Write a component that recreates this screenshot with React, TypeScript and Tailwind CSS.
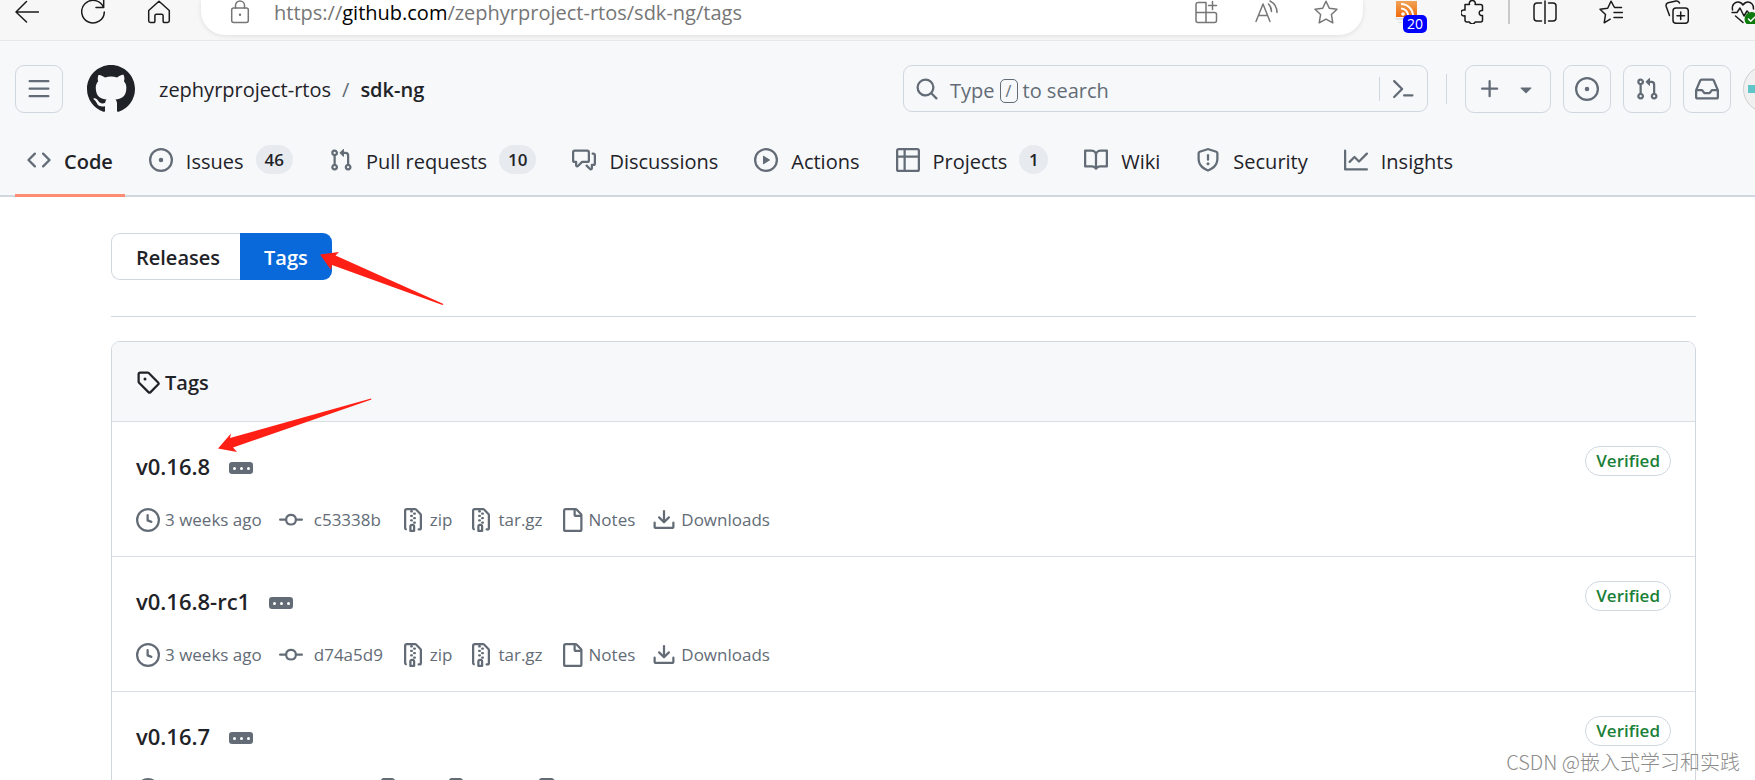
import type { ReactNode } from "react";

const paths = {
  bars: "M1 2.75A.75.75 0 0 1 1.75 2h12.5a.75.75 0 0 1 0 1.5H1.75A.75.75 0 0 1 1 2.75Zm0 5A.75.75 0 0 1 1.75 7h12.5a.75.75 0 0 1 0 1.5H1.75A.75.75 0 0 1 1 7.75ZM1.75 12h12.5a.75.75 0 0 1 0 1.5H1.75a.75.75 0 0 1 0-1.5Z",
  github:
    "M8 0c4.42 0 8 3.58 8 8a8.013 8.013 0 0 1-5.45 7.59c-.4.08-.55-.17-.55-.38 0-.27.01-1.13.01-2.2 0-.75-.25-1.23-.54-1.48 1.78-.2 3.65-.88 3.65-3.95 0-.88-.31-1.59-.82-2.15.08-.2.36-1.02-.08-2.12 0 0-.67-.22-2.2.82-.64-.18-1.32-.27-2-.27-.68 0-1.36.09-2 .27-1.53-1.03-2.2-.82-2.2-.82-.44 1.1-.16 1.92-.08 2.12-.51.56-.82 1.28-.82 2.15 0 3.06 1.86 3.75 3.64 3.95-.23.2-.44.55-.51 1.07-.46.21-1.61.55-2.33-.66-.15-.24-.6-.83-1.23-.82-.67.01-.27.38.01.53.34.19.73.9.82 1.13.16.45.68 1.31 2.69.94 0 .67.01 1.3.01 1.49 0 .21-.15.45-.55.38A7.995 7.995 0 0 1 0 8c0-4.42 3.58-8 8-8Z",
  search:
    "M10.68 11.74a6 6 0 0 1-7.922-8.982 6 6 0 0 1 8.982 7.922l3.04 3.04a.749.749 0 0 1-.326 1.275.749.749 0 0 1-.734-.215ZM11.5 7a4.499 4.499 0 1 0-8.997 0A4.499 4.499 0 0 0 11.5 7Z",
  palette:
    "m6.354 8.04-4.773 4.773a.75.75 0 1 0 1.061 1.06L7.945 8.57a.75.75 0 0 0 0-1.06L2.642 2.206a.75.75 0 0 0-1.06 1.061L6.353 8.04ZM8.75 11.5a.75.75 0 0 0 0 1.5h5.5a.75.75 0 0 0 0-1.5h-5.5Z",
  plus: "M7.75 2a.75.75 0 0 1 .75.75V7h4.25a.75.75 0 0 1 0 1.5H8.5v4.25a.75.75 0 0 1-1.5 0V8.5H2.75a.75.75 0 0 1 0-1.5H7V2.75A.75.75 0 0 1 7.75 2Z",
  caret:
    "m4.427 7.427 3.396 3.396a.25.25 0 0 0 .354 0l3.396-3.396A.25.25 0 0 0 11.396 7H4.604a.25.25 0 0 0-.177.427Z",
  inbox:
    "M2.8 2.06A1.75 1.75 0 0 1 4.41 1h7.18c.7 0 1.333.417 1.61 1.06l2.74 6.395c.04.093.06.194.06.295v4.5A1.75 1.75 0 0 1 14.25 15H1.75A1.75 1.75 0 0 1 0 13.25v-4.5c0-.101.02-.202.06-.295Zm1.61.44a.25.25 0 0 0-.23.152L1.887 8H4.75a.75.75 0 0 1 .6.3L6.625 10h2.75l1.275-1.7a.75.75 0 0 1 .6-.3h2.863L11.82 2.652a.25.25 0 0 0-.23-.152Zm10.09 7h-2.875l-1.275 1.7a.75.75 0 0 1-.6.3h-3.5a.75.75 0 0 1-.6-.3L4.375 9.5H1.5v3.75c0 .138.112.25.25.25h12.5a.25.25 0 0 0 .25-.25Z",
  code: "m11.28 3.22 4.25 4.25a.75.75 0 0 1 0 1.06l-4.25 4.25a.749.749 0 0 1-1.275-.326.749.749 0 0 1 .215-.734L13.94 8l-3.72-3.72a.749.749 0 0 1 .326-1.275.749.749 0 0 1 .734.215Zm-6.56 0a.751.751 0 0 1 1.042.018.751.751 0 0 1 .018 1.042L2.06 8l3.72 3.72a.749.749 0 0 1-.326 1.275.749.749 0 0 1-.734-.215L.47 8.53a.75.75 0 0 1 0-1.06Z",
  issue:
    "M8 9.5a1.5 1.5 0 1 0 0-3 1.5 1.5 0 0 0 0 3ZM8 0a8 8 0 1 1 0 16A8 8 0 0 1 8 0ZM1.5 8a6.5 6.5 0 1 0 13 0 6.5 6.5 0 0 0-13 0Z",
  pull: "M1.5 3.25a2.25 2.25 0 1 1 3 2.122v5.256a2.251 2.251 0 1 1-1.5 0V5.372A2.25 2.25 0 0 1 1.5 3.25Zm5.677-.177L9.573.677A.25.25 0 0 1 10 .854V2.5h1A2.5 2.5 0 0 1 13.5 5v5.628a2.251 2.251 0 1 1-1.5 0V5a1 1 0 0 0-1-1h-1v1.646a.25.25 0 0 1-.427.177L7.177 3.427a.25.25 0 0 1 0-.354ZM3.75 2.5a.75.75 0 1 0 0 1.5.75.75 0 0 0 0-1.5Zm0 9.5a.75.75 0 1 0 0 1.5.75.75 0 0 0 0-1.5Zm8.25.75a.75.75 0 1 0 1.5 0 .75.75 0 0 0-1.5 0Z",
  discussion:
    "M1.75 1h8.5c.966 0 1.75.784 1.75 1.75v5.5A1.75 1.75 0 0 1 10.25 10H7.061l-2.574 2.573A1.458 1.458 0 0 1 2 11.543V10h-.25A1.75 1.75 0 0 1 0 8.25v-5.5C0 1.784.784 1 1.75 1ZM1.5 2.75v5.5c0 .138.112.25.25.25h1a.75.75 0 0 1 .75.75v2.19l2.72-2.72a.749.749 0 0 1 .53-.22h3.5a.25.25 0 0 0 .25-.25v-5.5a.25.25 0 0 0-.25-.25h-8.5a.25.25 0 0 0-.25.25Zm13 2a.25.25 0 0 0-.25-.25h-.5a.75.75 0 0 1 0-1.5h.5c.966 0 1.75.784 1.75 1.75v5.5A1.75 1.75 0 0 1 14.25 12H14v1.543a1.458 1.458 0 0 1-2.487 1.03L9.22 12.28a.749.749 0 0 1 .326-1.275.749.749 0 0 1 .734.215l2.22 2.22v-2.19a.75.75 0 0 1 .75-.75h1a.25.25 0 0 0 .25-.25Z",
  play: "M8 0a8 8 0 1 1 0 16A8 8 0 0 1 8 0ZM1.5 8a6.5 6.5 0 1 0 13 0 6.5 6.5 0 0 0-13 0Zm4.879-2.773 4.264 2.559a.25.25 0 0 1 0 .428l-4.264 2.559A.25.25 0 0 1 6 10.559V5.442a.25.25 0 0 1 .379-.215Z",
  table:
    "M0 1.75C0 .784.784 0 1.75 0h12.5C15.216 0 16 .784 16 1.75v12.5A1.75 1.75 0 0 1 14.25 16H1.75A1.75 1.75 0 0 1 0 14.25ZM6.5 6.5v8h7.75a.25.25 0 0 0 .25-.25V6.5Zm8-1.5V1.75a.25.25 0 0 0-.25-.25H6.5V5Zm-13 1.5v7.75c0 .138.112.25.25.25H5v-8ZM5 5V1.5H1.75a.25.25 0 0 0-.25.25V5Z",
  book: "M0 1.75A.75.75 0 0 1 .75 1h4.253c1.227 0 2.317.59 3 1.501A3.743 3.743 0 0 1 11.006 1h4.245a.75.75 0 0 1 .75.75v10.5a.75.75 0 0 1-.75.75h-4.507a2.25 2.25 0 0 0-1.591.659l-.622.621a.75.75 0 0 1-1.06 0l-.622-.621A2.25 2.25 0 0 0 5.258 13H.75a.75.75 0 0 1-.75-.75Zm7.251 10.324.004-5.073-.002-2.253A2.25 2.25 0 0 0 5.003 2.5H1.5v9h3.757a3.75 3.75 0 0 1 1.994.574ZM8.755 4.75l-.004 7.322a3.752 3.752 0 0 1 1.992-.572H14.5v-9h-3.495a2.25 2.25 0 0 0-2.25 2.25Z",
  shield:
    "M7.467.133a1.748 1.748 0 0 1 1.066 0l5.25 1.68A1.75 1.75 0 0 1 15 3.48V7c0 1.566-.32 3.182-1.303 4.682-.983 1.498-2.585 2.813-5.032 3.855a1.697 1.697 0 0 1-1.33 0c-2.447-1.042-4.049-2.357-5.032-3.855C1.32 10.182 1 8.566 1 7V3.48a1.75 1.75 0 0 1 1.217-1.667Zm.61 1.429a.25.25 0 0 0-.153 0l-5.25 1.68a.25.25 0 0 0-.174.238V7c0 1.358.275 2.666 1.057 3.86.784 1.194 2.121 2.34 4.366 3.297a.196.196 0 0 0 .154 0c2.245-.956 3.582-2.104 4.366-3.298C13.225 9.666 13.5 8.36 13.5 7V3.48a.251.251 0 0 0-.174-.237l-5.25-1.68ZM8.75 4.75v3a.75.75 0 0 1-1.5 0v-3a.75.75 0 0 1 1.5 0ZM9 10.5a1 1 0 1 1-2 0 1 1 0 0 1 2 0Z",
  graph:
    "M1.5 1.75V13.5h13.75a.75.75 0 0 1 0 1.5H.75a.75.75 0 0 1-.75-.75V1.75a.75.75 0 0 1 1.5 0Zm14.28 2.53-5.25 5.25a.75.75 0 0 1-1.06 0L7 7.06 4.28 9.78a.751.751 0 0 1-1.042-.018.751.751 0 0 1-.018-1.042l3.25-3.25a.75.75 0 0 1 1.06 0L10 7.94l4.72-4.72a.751.751 0 0 1 1.042.018.751.751 0 0 1 .018 1.042Z",
  tag: "M1 7.775V2.75C1 1.784 1.784 1 2.75 1h5.025c.464 0 .91.184 1.238.513l6.25 6.25a1.75 1.75 0 0 1 0 2.474l-5.026 5.026a1.75 1.75 0 0 1-2.474 0l-6.25-6.25A1.752 1.752 0 0 1 1 7.775Zm1.5 0c0 .066.026.13.073.177l6.25 6.25a.25.25 0 0 0 .354 0l5.025-5.025a.25.25 0 0 0 0-.354l-6.25-6.25a.25.25 0 0 0-.177-.073H2.75a.25.25 0 0 0-.25.25ZM6 5a1 1 0 1 1 0 2 1 1 0 0 1 0-2Z",
  clock:
    "M8 0a8 8 0 1 1 0 16A8 8 0 0 1 8 0ZM1.5 8a6.5 6.5 0 1 0 13 0 6.5 6.5 0 0 0-13 0Zm7-3.25v2.992l2.028.812a.75.75 0 0 1-.557 1.392l-2.5-1A.751.751 0 0 1 7 8.25v-3.5a.75.75 0 0 1 1.5 0Z",
  commit:
    "M11.93 8.5a4.002 4.002 0 0 1-7.86 0H.75a.75.75 0 0 1 0-1.5h3.32a4.002 4.002 0 0 1 7.86 0h3.32a.75.75 0 0 1 0 1.5Zm-1.43-.75a2.5 2.5 0 1 0-5 0 2.5 2.5 0 0 0 5 0Z",
  zip: "M3.5 1.75v11.5c0 .09.048.173.126.217a.75.75 0 0 1-.752 1.298A1.748 1.748 0 0 1 2 13.25V1.75C2 .784 2.784 0 3.75 0h5.586c.464 0 .909.185 1.237.513l2.914 2.914c.329.328.513.773.513 1.237v8.586A1.75 1.75 0 0 1 12.25 15h-.5a.75.75 0 0 1 0-1.5h.5a.25.25 0 0 0 .25-.25V4.664a.25.25 0 0 0-.073-.177L9.513 1.573a.25.25 0 0 0-.177-.073H7.25a.75.75 0 0 1 0 1.5h-.5a.75.75 0 0 1 0-1.5h-3a.25.25 0 0 0-.25.25Zm3.75 8.75h.5c.966 0 1.75.784 1.75 1.75v3a.75.75 0 0 1-.75.75h-2.5a.75.75 0 0 1-.75-.75v-3c0-.966.784-1.75 1.75-1.75ZM6 5.25a.75.75 0 0 1 .75-.75h.5a.75.75 0 0 1 0 1.5h-.5A.75.75 0 0 1 6 5.25Zm.75 2.25h.5a.75.75 0 0 1 0 1.5h-.5a.75.75 0 0 1 0-1.5ZM8 6.75A.75.75 0 0 1 8.75 6h.5a.75.75 0 0 1 0 1.5h-.5A.75.75 0 0 1 8 6.75ZM8.75 3h.5a.75.75 0 0 1 0 1.5h-.5a.75.75 0 0 1 0-1.5ZM8 9.75A.75.75 0 0 1 8.75 9h.5a.75.75 0 0 1 0 1.5h-.5A.75.75 0 0 1 8 9.75Zm-1 2.5v2.25h1v-2.25a.25.25 0 0 0-.25-.25h-.5a.25.25 0 0 0-.25.25Z",
  file: "M2 1.75C2 .784 2.784 0 3.75 0h6.586c.464 0 .909.184 1.237.513l2.914 2.914c.329.328.513.773.513 1.237v9.586A1.75 1.75 0 0 1 13.25 16h-9.5A1.75 1.75 0 0 1 2 14.25Zm1.75-.25a.25.25 0 0 0-.25.25v12.5c0 .138.112.25.25.25h9.5a.25.25 0 0 0 .25-.25V6h-2.75A1.75 1.75 0 0 1 9 4.25V1.5Zm6.75.062V4.25c0 .138.112.25.25.25h2.688l-.011-.013-2.914-2.914-.013-.011Z",
  download:
    "M2.75 14A1.75 1.75 0 0 1 1 12.25v-2.5a.75.75 0 0 1 1.5 0v2.5c0 .138.112.25.25.25h10.5a.25.25 0 0 0 .25-.25v-2.5a.75.75 0 0 1 1.5 0v2.5A1.75 1.75 0 0 1 13.25 14ZM7.25 7.689V2a.75.75 0 0 1 1.5 0v5.689l1.97-1.969a.749.749 0 1 1 1.06 1.06l-3.25 3.25a.749.749 0 0 1-1.06 0L4.22 6.78a.749.749 0 1 1 1.06-1.06l1.97 1.969Z",
};

type IconName = keyof typeof paths;

const Icon = ({
  name,
  className = "size-6 text-[#636c76]",
}: {
  name: IconName;
  className?: string;
}) => (
  <svg
    viewBox="0 0 16 16"
    fill="currentColor"
    aria-hidden="true"
    className={`shrink-0 ${className}`}
  >
    <path d={paths[name]} />
  </svg>
);

// Thin outline icons of the browser toolbar
const Line = ({ children }: { children: ReactNode }) => (
  <svg
    viewBox="0 0 24 24"
    fill="none"
    stroke="currentColor"
    strokeWidth="1.5"
    strokeLinecap="round"
    strokeLinejoin="round"
    aria-hidden="true"
    className="size-6 shrink-0"
  >
    {children}
  </svg>
);

const ToolButton = ({
  label,
  children,
}: {
  label: string;
  children: ReactNode;
}) => (
  <button type="button" aria-label={label} className="relative shrink-0">
    <Line>{children}</Line>
  </button>
);

const BrowserBar = () => (
  <div className="flex h-10 items-start overflow-hidden bg-[#f7f7f7] pl-[15px] text-[#1b1b1b]">
    <div className="flex gap-[42px]">
      <ToolButton label="Back">
        <path d="M23.5 12H1M11.5 1.5 1 12l10.5 10" />
      </ToolButton>
      <ToolButton label="Refresh">
        <path d="M22.5 7.5A11.3 11.3 0 1 0 23.3 12M22.7 0v7.5H15" />
      </ToolButton>
      <ToolButton label="Home">
        <path d="M1.7 10.5 12 1.2l10.3 9.3v10.3a1.7 1.7 0 0 1-1.7 1.7h-3.3a1.2 1.2 0 0 1-1.2-1.2v-5.6a1.5 1.5 0 0 0-1.5-1.5H9.4a1.5 1.5 0 0 0-1.5 1.5v5.6a1.2 1.2 0 0 1-1.2 1.2H3.4a1.7 1.7 0 0 1-1.7-1.7Z" />
      </ToolButton>
    </div>

    <div className="mr-8 ml-[30px] flex h-[35px] flex-1 items-start rounded-b-[24px] bg-white pr-[25px] pl-[27px] text-[#767676] shadow-[0_1px_5px_rgba(0,0,0,0.1)]">
      <Line>
        <rect x="3.7" y="8" width="16.6" height="14.5" rx="2" />
        <path d="M7.5 8V5.5a4.5 4.5 0 0 1 9 0V8" />
        <circle cx="12" cy="14.8" r="1.2" fill="currentColor" stroke="none" />
      </Line>
      <div
        role="textbox"
        aria-label="Address"
        className="ml-[22px] flex-1 text-xl leading-[26px] whitespace-nowrap"
      >
        https://<span className="text-black">github.com</span>
        /zephyrproject-rtos/sdk-ng/tags
      </div>
      <div className="flex gap-9">
        <ToolButton label="Apps">
          <path d="M11.5 2.5H4A2 2 0 0 0 2 4.5V20.5a2 2 0 0 0 2 2H20.5a2 2 0 0 0 2-2V14.500a2 2 0 0 0-2-2H2M12 2.500v20M18.500 1.500v8M14.500 5.500h8" />
        </ToolButton>
        <ToolButton label="Read aloud">
          <path d="m2 21.500 7-17.500 7 17.500M4.500 15.500h9M14.500 4c1.900 1.800 2.900 4 3 7.500M16 1c4.500 2.500 7 6.500 7 11.500" />
        </ToolButton>
        <ToolButton label="Add to favorites">
          <path d="m12 1.200 3.300 7 7.700 1-5.600 5.300 1.400 8.300-6.800-3.700-6.800 3.700 1.400-8.300L1 9.200l7.700-1Z" />
        </ToolButton>
      </div>
    </div>

    <button type="button" aria-label="RSS feeds" className="relative shrink-0">
      <svg viewBox="0 0 24 24" className="size-6" aria-hidden="true">
        <defs>
          <linearGradient id="rss" x1="0" y1="0" x2="0" y2="1">
            <stop offset="0" stopColor="#f0a356" />
            <stop offset="1" stopColor="#f26a0c" />
          </linearGradient>
        </defs>
        <path d="M0 18h24l-1 2H1ZM3 22h4v1H3Z" fill="#e2e2e2" />
        <rect x="1" y="1" width="21" height="16" fill="url(#rss)" />
        <circle cx="8" cy="14" r="1.800" fill="#fff" />
        <path
          d="M6 8.500a7 7 0 0 1 7 7.500M6 4a12 12 0 0 1 12 12"
          fill="none"
          stroke="#fff"
          strokeWidth="2"
        />
      </svg>
      <span className="absolute top-[15px] left-2 flex h-[18px] w-6 items-center justify-center rounded-[5px] bg-[#0000ff] text-sm text-white">
        20
      </span>
    </button>
    <div className="ml-[42px] flex items-center gap-[23px]">
      <ToolButton label="Extensions">
        <path d="M4 4.500H8.500a3 3 0 1 1 5.600 0h5.400a2 2 0 0 1 2 2v4a2.600 2.600 0 1 0 0 5v4.500a2 2 0 0 1-2 2h-5.400a3 3 0 0 1-5.600 0H6a2 2 0 0 1-2-2v-4.300a3 3 0 1 1 0-5.600Z" />
      </ToolButton>
      <span className="h-6 w-0.5 shrink-0 bg-[#c9c9c9]" />
      <ToolButton label="Split screen">
        <path d="M8.500 3H4a3 3 0 0 0-3 3v12a3 3 0 0 0 3 3h4.500M15.500 3H20a3 3 0 0 1 3 3v12a3 3 0 0 1-3 3h-4.500M12 1v22.500" />
      </ToolButton>
    </div>
    <div className="ml-[42px] flex gap-[42px]">
      <ToolButton label="Favorites">
        <path d="M22.500 7.500h-7L12 1.200 8.700 8.200l-7.700 1 5.500 5.300-1.300 8.300 6-3.600M15 12.500h8.500M15 17.500h8.500" />
      </ToolButton>
      <ToolButton label="Collections">
        <rect x="8" y="8" width="15.300" height="15.300" rx="3" />
        <path d="M15.700 12v7.500M12 15.700h7.500M4.500 15.500 1.200 6.500a3 3 0 0 1 1.900-3.700L11 1a3 3 0 0 1 3.500 2" />
      </ToolButton>
      <button
        type="button"
        aria-label="Browser essentials"
        className="relative shrink-0"
      >
        <Line>
          <path d="M1.500 10C.5 4 4.500 2 7 2s4 1.500 5 3c1-1.500 2.500-3 5-3s6 2.500 5.500 7M1 12.500h5l3-4.500 4 8 3-5 1.500 1.500M4.500 16l7.500 6.500" />
          <circle cx="20.500" cy="19" r="7" fill="#0f7b0f" stroke="none" />
          <path d="m17.500 19 2.200 2.200 4-4" stroke="#fff" />
        </Line>
      </button>
    </div>
  </div>
);

const HeaderButton = ({
  label,
  children,
}: {
  label: string;
  children: ReactNode;
}) => (
  <button
    type="button"
    aria-label={label}
    className="flex h-12 min-w-12 shrink-0 items-center justify-center rounded-[9px] border border-[#d0d7de]"
  >
    {children}
  </button>
);

const SiteHeader = () => (
  <div className="flex items-center overflow-hidden px-[15px] pt-6">
    <HeaderButton label="Open menu">
      <Icon name="bars" />
    </HeaderButton>
    <a href="#home" aria-label="Homepage" className="ml-6">
      <Icon name="github" className="size-12 text-[#1f2328]" />
    </a>
    <nav aria-label="Breadcrumb" className="ml-6 flex pt-0.5 text-xl">
      <a href="#owner">zephyrproject-rtos</a>
      <span className="px-[11px] text-[#636c76]">/</span>
      <a href="#repo" className="font-semibold">
        sdk-ng
      </a>
    </nav>

    <div className="mb-px ml-auto flex h-[47px] w-[525px] items-center rounded-[9px] border border-[#d0d7de] text-[#636c76]">
      <button
        type="button"
        className="flex flex-1 items-center pl-[11px] text-xl"
      >
        <Icon name="search" />
        <span className="flex items-center pt-1 pl-[11px]">
          Type
          <kbd className="mx-[5px] flex h-6 w-[18px] items-center justify-center rounded-[5px] border border-[#636c76] font-[inherit] text-base">
            /
          </kbd>
          to search
        </span>
      </button>
      <span className="h-6 w-px bg-[#d0d7de]" />
      <button
        type="button"
        aria-label="Command palette"
        className="pr-3 pl-[11px]"
      >
        <Icon name="palette" />
      </button>
    </div>

    <span className="mx-[18px] h-[30px] w-px bg-[#d0d7de]" />

    <div className="-mr-[51px] flex gap-3">
      <HeaderButton label="Create new">
        <span className="flex items-center gap-3 px-3">
          <Icon name="plus" />
          <Icon name="caret" />
        </span>
      </HeaderButton>
      <HeaderButton label="Issues">
        <Icon name="issue" />
      </HeaderButton>
      <HeaderButton label="Pull requests">
        <Icon name="pull" />
      </HeaderButton>
      <HeaderButton label="Notifications">
        <Icon name="inbox" />
      </HeaderButton>
      <button
        type="button"
        aria-label="Account"
        className="flex size-12 shrink-0 items-center rounded-full border border-[#d0d0d0] bg-[#f0f0f0] pl-1"
      >
        <span className="h-2 w-9 bg-[#5fc5c8]" />
      </button>
    </div>
  </div>
);

const tabs: { icon: IconName; label: string; count?: number }[] = [
  { icon: "code", label: "Code" },
  { icon: "issue", label: "Issues", count: 46 },
  { icon: "pull", label: "Pull requests", count: 10 },
  { icon: "discussion", label: "Discussions" },
  { icon: "play", label: "Actions" },
  { icon: "table", label: "Projects", count: 1 },
  { icon: "book", label: "Wiki" },
  { icon: "shield", label: "Security" },
  { icon: "graph", label: "Insights" },
];

const RepoNav = () => (
  <nav
    aria-label="Repository"
    className="mt-3 flex gap-3 border-b-2 border-[#d0d7de] px-[15px] text-xl"
  >
    {tabs.map((tab) => (
      <a
        key={tab.label}
        href={`#${tab.icon}`}
        className={`-mb-0.5 flex h-[72px] items-center border-b-3 px-3 whitespace-nowrap ${
          tab.icon === "code"
            ? "border-[#fd8c73] font-semibold"
            : "border-transparent"
        }`}
      >
        <Icon name={tab.icon} />
        <span className="min-w-[52px] pt-1 pl-[13px]">{tab.label}</span>
        {tab.count && (
          <span className="ml-3 flex h-[29px] min-w-[29px] items-center justify-center rounded-full bg-[#e7ebef] px-[9px] text-[17px] font-semibold">
            {tab.count}
          </span>
        )}
      </a>
    ))}
  </nav>
);

const MetaItem = ({ icon, label }: { icon: IconName; label: string }) => (
  <a href={`#${icon}`} className="flex items-center gap-[5px]">
    <Icon name={icon} />
    {label}
  </a>
);

const releases = [
  { tag: "v0.16.8", date: "3 weeks ago", sha: "c53338b" },
  { tag: "v0.16.8-rc1", date: "3 weeks ago", sha: "d74a5d9" },
  { tag: "v0.16.7", date: "last week", sha: "e1f7a3b" },
];

const TagRow = ({
  tag,
  date,
  sha,
  marked,
}: {
  tag: string;
  date: string;
  sha: string;
  marked: boolean;
}) => (
  <li className="flex items-start justify-between border-t border-[#d8dee4] px-6 py-6">
    <div>
      <div className="relative flex h-10 items-center gap-[19px]">
        <h2 className="text-[22px] leading-[38px] font-semibold">
          <a href={`#${tag}`}>{tag}</a>
        </h2>
        <button
          type="button"
          aria-label="Toggle commit message"
          className="mt-1 flex h-3 w-6 items-center justify-center gap-1 rounded-[3px] bg-[#636c76]"
        >
          <span className="size-[3px] rounded-full bg-white" />
          <span className="size-[3px] rounded-full bg-white" />
          <span className="size-[3px] rounded-full bg-white" />
        </button>
        {marked && (
          <svg
            viewBox="0 0 154 54"
            aria-hidden="true"
            className="absolute -top-12 left-[82px] h-[54px] w-[154px]"
          >
            <path
              d="M0 50.500 13 35.500 12 40 153 .500 153.500 1.500 15 49.500 19 54Z"
              fill="#ff1f14"
            />
          </svg>
        )}
      </div>
      <div className="mt-[22px] flex h-6 items-center gap-[17px] text-[17px] text-[#636c76]">
        <span className="flex items-center gap-[5px]">
          <Icon name="clock" />
          {date}
        </span>
        <a href={`#${sha}`} className="flex items-center gap-[11px]">
          <Icon name="commit" />
          <span className="min-w-[70px]">{sha}</span>
        </a>
        <MetaItem icon="zip" label="zip" />
        <MetaItem icon="zip" label="tar.gz" />
        <MetaItem icon="file" label="Notes" />
        <MetaItem icon="download" label="Downloads" />
      </div>
    </div>
    <button
      type="button"
      className="flex h-[30px] items-center rounded-full border border-[#d0d7de] px-2.5 text-[17px] font-semibold text-[#1a7f37]"
    >
      Verified
    </button>
  </li>
);

const App = () => {
  return (
    <div className="relative h-screen overflow-hidden bg-white font-['Open_Sans','Noto_Sans_CJK_SC',sans-serif] text-[#1f2328]">
      <BrowserBar />
      <header className="border-t border-[#e8e8e8] bg-[#f6f8fa]">
        <SiteHeader />
        <RepoNav />
      </header>

      <main className="pt-9 pr-[59px] pl-[111px]">
        <nav
          aria-label="Releases and tags"
          className="flex text-xl font-semibold"
        >
          <a
            href="#releases"
            className="flex h-[47px] items-center rounded-l-[9px] border border-r-0 border-[#d0d7de] pt-0.5 pr-5 pl-6"
          >
            Releases
          </a>
          <a
            href="#tags"
            className="relative flex h-[47px] items-center rounded-r-[9px] bg-[#0969da] px-6 pt-0.5 text-white"
          >
            Tags
            <svg
              viewBox="0 0 124 54"
              aria-hidden="true"
              className="absolute top-[19px] left-20 h-[54px] w-[124px]"
            >
              <path
                d="M0 2.500 19 0 15.500 3.500 123.500 52 122.500 53 12 13 11 18Z"
                fill="#ff1f14"
              />
            </svg>
          </a>
        </nav>

        <hr className="mt-9 border-[#d0d7de]" />

        <section className="mt-6 rounded-t-[9px] border border-[#d0d7de]">
          <h1 className="flex h-[79px] items-center gap-[5px] rounded-t-[8px] bg-[#f6f8fa] px-6 text-xl font-semibold">
            <Icon name="tag" className="size-6 text-[#1f2328]" />
            <span className="pt-0.5">Tags</span>
          </h1>
          <ul>
            {releases.map((release, i) => (
              <TagRow key={release.tag} {...release} marked={i === 0} />
            ))}
          </ul>
        </section>
      </main>

      <p className="absolute right-[15px] bottom-1 font-['Noto_Sans_CJK_SC',sans-serif] text-xl font-light text-[#8c8c8c]">
        CSDN @嵌入式学习和实践
      </p>
    </div>
  );
};

export default App;
